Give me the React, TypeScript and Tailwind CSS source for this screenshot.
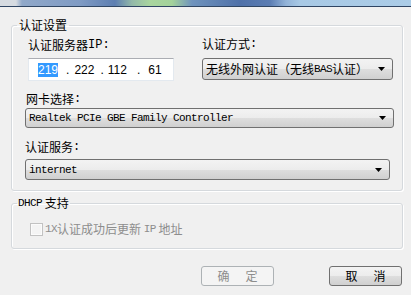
import React from "react";

const cjk = "font-['Noto_Sans_CJK_SC',sans-serif]";

function Arrow() {
  return (
    <svg width="7" height="4" viewBox="0 0 7 4" className="shrink-0">
      <path d="M0 0H7L3.5 4Z" fill="#000" />
    </svg>
  );
}

function Combo({ w, h, children }: { w: string; h: string; children: React.ReactNode }) {
  return (
    <div
      className={`${w} ${h} flex items-center justify-between pl-[3px] pr-[7px] border border-[#707070] rounded-[3px] bg-[linear-gradient(#f3f3f3,#ececec_50%,#dedede_50%,#d0d0d0)]`}
    >
      <div className="flex items-center h-[14px] whitespace-nowrap text-black">{children}</div>
      <Arrow />
    </div>
  );
}

function Mono({ children }: { children: React.ReactNode }) {
  return (
    <span className="font-['Liberation_Mono',monospace] text-[11px] leading-[14px] tracking-[-0.6px]">{children}</span>
  );
}

function Label({ children, className = "" }: { children: React.ReactNode; className?: string }) {
  return <div className={`${cjk} text-[12px] leading-[14px] h-[14px] text-black ${className}`}>{children}</div>;
}

function Button({ a, b, disabled }: { a: string; b: string; disabled?: boolean }) {
  return (
    <div
      className={`w-[73px] h-[20px] flex items-center justify-center gap-[16px] rounded-[3px] border ${cjk} text-[12px] leading-[14px] ${
        disabled
          ? "border-[#adb2b5] bg-[#f4f4f4] text-[#8d8d8d]"
          : "border-[#707070] text-black bg-[linear-gradient(#f3f3f3,#ececec_50%,#dedede_50%,#d0d0d0)]"
      }`}
    >
      <span>{a}</span>
      <span>{b}</span>
    </div>
  );
}

export default function App() {
  return (
    <div className="w-[416px] h-[301px] bg-white flex overflow-hidden">
      <div className="w-[411px] h-[295px] bg-[#f0f0f0] flex flex-col">
        {/* title bar edge */}
        <div className="h-[7px] border-b border-[#2f4563] bg-[linear-gradient(90deg,#d6dbe1_0px,#d6dbe1_16px,#90a8c9_22px,#7f9bc4_80px,#5d7eb1_115px,#93b9a9_132px,#a9d59e_150px,#a3d29b_172px,#6f93bd_192px,#4f71a9_240px,#5b7db3_270px,#92b3d8_286px,#a8c9e5_300px,#abcce7_411px)]" />

        {/* 认证设置 */}
        <fieldset className="mt-[11px] ml-[11px] w-[392px] px-[5px] pb-[10px] border border-[#d5d9dd] rounded-[3px] shadow-[inset_1px_1px_0_#fff,1px_1px_0_#fff]">
          <legend className={`px-[2px] h-[14px] ${cjk} text-[12px] leading-[14px] text-black`}>认证设置</legend>
          <div className="pl-[8px] pt-[6px]">
            <div className="flex ml-[3px]">
              <div className="w-[146px]">
                <Label className="mb-[6px] flex items-center">
                  认证服务器<span className="font-['Liberation_Mono',monospace]">IP:</span>
                </Label>
                <div className="h-[23px] bg-white border border-[#e3e9ef] border-t-[#abadb3] flex items-center font-['Liberation_Sans',sans-serif] text-[12px] leading-[14px] text-black">
                  <span className="ml-[9px] bg-[#3399ff] text-white">219</span>
                  <span className="ml-[8px]">.</span>
                  <span className="ml-[5px]">222</span>
                  <span className="ml-[6px]">.</span>
                  <span className="ml-[4px]">112</span>
                  <span className="ml-[10px]">.</span>
                  <span className="ml-[8px]">61</span>
                </div>
              </div>
              <div className="ml-[28px]">
                <Label className="mb-[7px] -mt-[1px] flex items-center">
                  认证方式<span className="font-['Liberation_Mono',monospace]">:</span>
                </Label>
                <Combo w="w-[191px]" h="h-[22px]">
                  <span className={`${cjk} text-[12px] leading-[14px]`}>无线外网认证（无线</span>
                  <Mono>BAS</Mono>
                  <span className={`${cjk} text-[12px] leading-[14px]`}>认证）</span>
                </Combo>
              </div>
            </div>

            <Label className="mt-[11px] ml-[1px] mb-[2px] flex items-center">
              网卡选择<span className="font-['Liberation_Mono',monospace]">:</span>
            </Label>
            <Combo w="w-[369px]" h="h-[20px]">
              <Mono>Realtek PCIe GBE Family Controller</Mono>
            </Combo>

            <Label className="mt-[12px] mb-[5px] flex items-center">
              认证服务<span className="font-['Liberation_Mono',monospace]">:</span>
            </Label>
            <Combo w="w-[365px]" h="h-[21px]">
              <Mono>internet</Mono>
            </Combo>
          </div>
        </fieldset>

        {/* DHCP 支持 */}
        <fieldset className="mt-[5px] ml-[11px] w-[392px] px-[5px] pb-[12px] border border-[#d5d9dd] rounded-[3px] shadow-[inset_1px_1px_0_#fff,1px_1px_0_#fff]">
          <legend className={`px-[1px] h-[14px] flex items-center ${cjk} text-[12px] leading-[14px] text-black`}>
            <Mono>DHCP</Mono>&nbsp;支持
          </legend>
          <div className="mt-[12px] ml-[13px] flex items-center gap-[2px] h-[14px]">
            <div className="w-[13px] h-[13px] border border-[#c2c2c2] bg-[#f4f4f4] shadow-[inset_0_0_0_1px_#fbfbfb]" />
            <span className={`${cjk} text-[12px] leading-[14px] h-[14px] text-[#8d8d8d] flex items-center whitespace-nowrap`}>
              <Mono>1X</Mono>认证成功后更新&nbsp;<Mono>IP</Mono>&nbsp;地址
            </span>
          </div>
        </fieldset>

        <div className="mt-[17px] flex justify-end gap-[55px] pr-[9px]">
          <Button a="确" b="定" disabled />
          <Button a="取" b="消" />
        </div>
      </div>
    </div>
  );
}
